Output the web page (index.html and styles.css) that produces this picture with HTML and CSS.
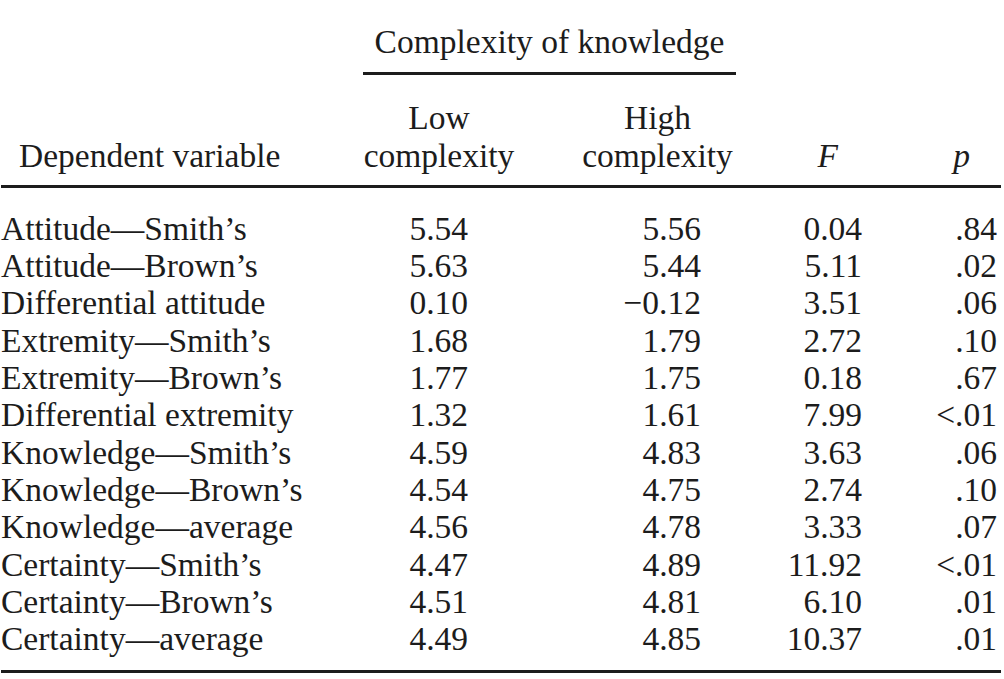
FILE: index.html
```html
<!DOCTYPE html>
<html lang="en">
<head>
<meta charset="utf-8">
<title>Complexity of knowledge</title>
<link rel="stylesheet" href="styles.css">
</head>
<body>
<table class="stats">
  <colgroup>
    <col class="c-label">
    <col class="c-low">
    <col class="c-high">
    <col class="c-f">
    <col class="c-p">
  </colgroup>
  <thead>
    <tr class="span-row">
      <th></th>
      <th colspan="2" class="spanner">Complexity of knowledge</th>
      <th></th>
      <th></th>
    </tr>
    <tr class="head-row">
      <th class="h-label">Dependent variable</th>
      <th class="h-low">Low<br>complexity</th>
      <th class="h-high">High<br>complexity</th>
      <th class="h-f"><i>F</i></th>
      <th class="h-p"><i>p</i></th>
    </tr>
  </thead>
  <tbody>
    <tr><td>Attitude—Smith’s</td><td class="v-low">5.54</td><td class="v-high">5.56</td><td class="v-f">0.04</td><td class="v-p">.84</td></tr>
    <tr><td>Attitude—Brown’s</td><td class="v-low">5.63</td><td class="v-high">5.44</td><td class="v-f">5.11</td><td class="v-p">.02</td></tr>
    <tr><td>Differential attitude</td><td class="v-low">0.10</td><td class="v-high">−0.12</td><td class="v-f">3.51</td><td class="v-p">.06</td></tr>
    <tr><td>Extremity—Smith’s</td><td class="v-low">1.68</td><td class="v-high">1.79</td><td class="v-f">2.72</td><td class="v-p">.10</td></tr>
    <tr><td>Extremity—Brown’s</td><td class="v-low">1.77</td><td class="v-high">1.75</td><td class="v-f">0.18</td><td class="v-p">.67</td></tr>
    <tr><td>Differential extremity</td><td class="v-low">1.32</td><td class="v-high">1.61</td><td class="v-f">7.99</td><td class="v-p">&lt;.01</td></tr>
    <tr><td>Knowledge—Smith’s</td><td class="v-low">4.59</td><td class="v-high">4.83</td><td class="v-f">3.63</td><td class="v-p">.06</td></tr>
    <tr><td>Knowledge—Brown’s</td><td class="v-low">4.54</td><td class="v-high">4.75</td><td class="v-f">2.74</td><td class="v-p">.10</td></tr>
    <tr><td>Knowledge—average</td><td class="v-low">4.56</td><td class="v-high">4.78</td><td class="v-f">3.33</td><td class="v-p">.07</td></tr>
    <tr><td>Certainty—Smith’s</td><td class="v-low">4.47</td><td class="v-high">4.89</td><td class="v-f">11.92</td><td class="v-p">&lt;.01</td></tr>
    <tr><td>Certainty—Brown’s</td><td class="v-low">4.51</td><td class="v-high">4.81</td><td class="v-f">6.10</td><td class="v-p">.01</td></tr>
    <tr><td>Certainty—average</td><td class="v-low">4.49</td><td class="v-high">4.85</td><td class="v-f">10.37</td><td class="v-p">.01</td></tr>
  </tbody>
</table>
</body>
</html>
```
FILE: styles.css
```css
html, body {
  margin: 0;
  padding: 0;
  background: #ffffff;
}

body {
  font-family: "Liberation Serif", "Times New Roman", serif;
  font-size: 33.5px;
  color: #1c1c1c;
}

.stats {
  margin: 0 0 0 1px;
  width: 1000px;
  table-layout: fixed;
  border-collapse: separate;
  border-spacing: 0;
  line-height: 37.3px;
}

.c-label { width: 362px; }
.c-low { width: 152px; }
.c-high { width: 221px; }
.c-f { width: 140px; }
.c-p { width: 125px; }

.stats th,
.stats td {
  padding: 0;
  font-weight: normal;
  white-space: nowrap;
}

.stats .span-row th {
  padding-top: 23px;
  padding-bottom: 12px;
}

.stats .spanner {
  text-align: center;
  border-bottom: 3px solid #1c1c1c;
}

.stats .head-row th {
  vertical-align: bottom;
  padding-top: 24px;
  padding-bottom: 11px;
  border-bottom: 3px solid #1c1c1c;
}

.stats .head-row .h-label {
  text-align: left;
  padding-left: 18px;
}

.stats .head-row .h-low {
  text-align: center;
}

.stats .head-row .h-high {
  text-align: center;
  padding-left: 64px;
}

.stats .head-row .h-f {
  text-align: right;
  padding-right: 38px;
}

.stats .head-row .h-p {
  text-align: right;
  padding-right: 31px;
}

.stats tbody td {
  text-align: left;
}

.stats tbody tr:first-child td {
  padding-top: 22px;
}

.stats tbody tr:last-child td {
  padding-bottom: 13px;
  border-bottom: 3px solid #1c1c1c;
}

.stats tbody .v-low {
  text-align: right;
  padding-right: 47px;
}

.stats tbody .v-high {
  text-align: right;
  padding-right: 35px;
}

.stats tbody .v-f {
  text-align: right;
  padding-right: 14px;
}

.stats tbody .v-p {
  text-align: right;
  padding-right: 4px;
}
```
